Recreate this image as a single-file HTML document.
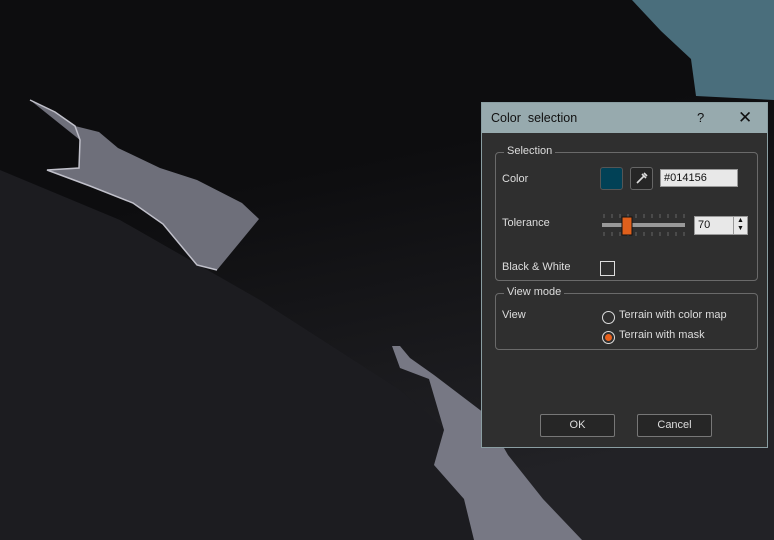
<!DOCTYPE html>
<html><head><style>
body{margin:0;width:774px;height:540px;overflow:hidden;background:#0c0c0e;font-family:"Liberation Sans",sans-serif;position:relative}
.dlg{position:absolute;left:481px;top:102px;width:287px;height:346px;background:#2f2f2f;border:1px solid #8a9ea2;box-sizing:border-box}
.tb{height:30px;background:#97aaae;color:#111;font-size:12.5px;line-height:30px;padding-left:9px;position:relative}
.t{position:absolute;color:#ddd;font-size:11px}
.grp{position:absolute;border:1px solid #6a6a6a;border-radius:4px}
.lg{position:absolute;background:#2f2f2f;padding:0 3px;color:#ddd;font-size:11px;top:-8px;left:8px}
.btn{position:absolute;width:73px;height:21px;border:1px solid #777;border-radius:2px;background:#262626;color:#ddd;font-size:11px;text-align:center;line-height:21px;top:311px}
</style></head><body>
<svg width="774" height="540" style="position:absolute;left:0;top:0">
<defs><linearGradient id="g" x1="0" y1="0" x2="0.3" y2="1"><stop offset="0.4" stop-color="#0d0d0f"/><stop offset="1" stop-color="#222226"/></linearGradient></defs>
<rect width="774" height="540" fill="url(#g)"/>
<polygon points="0,170 120,220 260,300 400,390 480,460 520,540 0,540" fill="#1c1c20"/>
<polygon points="632,0 774,0 774,100 696,96 691,59 661,31" fill="#4a6e7c"/>
<polygon points="30,100 55,112 75,126 99,132 118,148 160,168 197,180 242,203 259,219 217,270 197,265 163,224 133,203 90,186 47,170 79,168 80,140" fill="#6e6f7a"/>
<polyline points="30,100 55,112 75,126 80,140 79,168 47,170 90,186 133,203 163,224 197,265 217,270" fill="none" stroke="#c0c0ca" stroke-width="1.5"/>
<polygon points="392,346 400,368 429,379 444,430 434,465 464,499 474,540 582,540 543,499 508,455 484,413 434,375 410,358 400,346" fill="#777884"/>
</svg>
<div class="dlg">
<div class="tb">Color&nbsp; selection<span style="position:absolute;left:215px;font-size:13px">?</span><span style="position:absolute;left:256px;font-size:17px">✕</span></div>
<div class="grp" style="left:13px;top:49px;width:261px;height:127px"><span class="lg">Selection</span></div>
<span class="t" style="left:20px;top:70px">Color</span>
<div style="position:absolute;left:118px;top:64px;width:21px;height:21px;background:#014156;border:1px solid #555;border-radius:3px"></div>
<div style="position:absolute;left:148px;top:64px;width:21px;height:21px;background:#262626;border:1px solid #666;border-radius:3px">
<svg width="21" height="21"><path d="M6 15 L13 8 M11 6 L15 10 M13 5 L16 8" stroke="#ddd" stroke-width="1.6" fill="none"/></svg></div>
<div style="position:absolute;left:178px;top:66px;width:78px;height:18px;background:#e8e8e8;border:1px solid #999;box-sizing:border-box;font-size:11px;color:#111;line-height:16px;padding-left:3px">#014156</div>
<span class="t" style="left:20px;top:114px">Tolerance</span>
<svg style="position:absolute;left:120px;top:110px" width="85" height="24"><g stroke="#666">
<path d="M2 1v4M10 1v4M18 1v4M26 1v4M34 1v4M42 1v4M50 1v4M58 1v4M66 1v4M74 1v4M82 1v4M2 19v4M10 19v4M18 19v4M26 19v4M34 19v4M42 19v4M50 19v4M58 19v4M66 19v4M74 19v4M82 19v4"/></g>
<rect x="0" y="10" width="83" height="4" fill="#999"/>
<rect x="20" y="4" width="10" height="18" fill="#e0601c" stroke="#111"/></svg>
<div style="position:absolute;left:212px;top:113px;width:54px;height:19px;background:#e8e8e8;border:1px solid #999;box-sizing:border-box;font-size:11px;color:#111;line-height:17px;padding-left:3px">70<span style="position:absolute;right:0;top:0;width:13px;height:17px;border-left:1px solid #999;font-size:7px;line-height:8px;text-align:center">▲<br>▼</span></div>
<span class="t" style="left:20px;top:158px">Black &amp; White</span>
<div style="position:absolute;left:118px;top:158px;width:13px;height:13px;border:1px solid #ddd"></div>
<div class="grp" style="left:13px;top:190px;width:261px;height:55px"><span class="lg">View mode</span></div>
<span class="t" style="left:20px;top:206px">View</span>
<div style="position:absolute;left:120px;top:208px;width:11px;height:11px;border:1px solid #ddd;border-radius:50%"></div>
<span class="t" style="left:137px;top:206px">Terrain with color map</span>
<div style="position:absolute;left:120px;top:228px;width:11px;height:11px;border:1px solid #ddd;border-radius:50%;box-sizing:content-box"><div style="margin:2px;width:7px;height:7px;border-radius:50%;background:#e8601c"></div></div>
<span class="t" style="left:137px;top:226px">Terrain with mask</span>
<div class="btn" style="left:58px">OK</div>
<div class="btn" style="left:155px">Cancel</div>
</div>
</body></html>
